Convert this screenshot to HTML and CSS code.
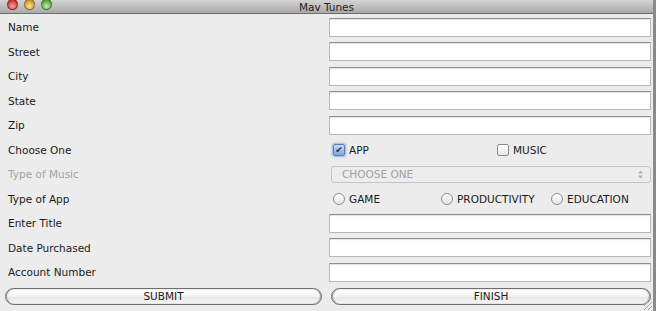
FILE: index.html
```html
<!DOCTYPE html>
<html lang="en">
<head>
    <meta charset="UTF-8">
    <title>Mav Tunes</title>
    <link rel="stylesheet" href="styles.css">
</head>
<body>
    <div class="window">
        <div class="titlebar">
            <div class="lights">
                <span class="light red"></span>
                <span class="light yellow"></span>
                <span class="light green"></span>
            </div>
            <div class="title">Mav Tunes</div>
        </div>

        <form class="form">
            <div class="row"><label>Name</label><input type="text" class="field"></div>
            <div class="row"><label>Street</label><input type="text" class="field"></div>
            <div class="row"><label>City</label><input type="text" class="field"></div>
            <div class="row"><label>State</label><input type="text" class="field"></div>
            <div class="row"><label>Zip</label><input type="text" class="field"></div>

            <div class="row">
                <label>Choose One</label>
                <div class="options">
                    <span class="opt opt-app"><span class="check checked">&#10004;</span>APP</span>
                    <span class="opt"><span class="check"></span>MUSIC</span>
                </div>
            </div>

            <div class="row">
                <label class="disabled">Type of Music</label>
                <div class="select">
                    <span>CHOOSE ONE</span>
                    <svg class="arrows" width="5" height="9" viewBox="0 0 5 9">
                        <path d="M0 3.5 L2.5 0.5 L5 3.5 Z M0 5.5 L2.5 8.5 L5 5.5 Z" fill="#b0b0b0"/>
                    </svg>
                </div>
            </div>

            <div class="row">
                <label>Type of App</label>
                <div class="options">
                    <span class="opt opt-game"><span class="radio"></span>GAME</span>
                    <span class="opt opt-prod"><span class="radio"></span>PRODUCTIVITY</span>
                    <span class="opt"><span class="radio"></span>EDUCATION</span>
                </div>
            </div>

            <div class="row"><label>Enter Title</label><input type="text" class="field"></div>
            <div class="row"><label>Date Purchased</label><input type="text" class="field"></div>
            <div class="row"><label>Account Number</label><input type="text" class="field"></div>

            <div class="buttons">
                <button type="button" class="btn btn-submit">SUBMIT</button>
                <button type="button" class="btn btn-finish">FINISH</button>
            </div>
        </form>
        <div class="grip"></div>
    </div>
</body>
</html>
```

FILE: styles.css
```css
* {
    margin: 0;
    padding: 0;
    box-sizing: border-box;
}

body {
    font-family: "DejaVu Sans", "Liberation Sans", sans-serif;
    font-size: 10.5px;
    color: #1a1a1a;
    background: #ececec;
    width: 656px;
    height: 311px;
    overflow: hidden;
}

.window {
    position: relative;
    height: 311px;
    background: #ececec;
    border-right: 3px solid #8a8a8a;
}

.titlebar {
    position: relative;
    height: 14px;
    background: linear-gradient(#d4d4d4, #a9a9a9);
    border-bottom: 1px solid #6e6e6e;
    display: flex;
    justify-content: center;
    align-items: center;
}

.lights {
    position: absolute;
    left: 7px;
    top: -1px;
    display: flex;
    gap: 6px;
}

.light {
    width: 11px;
    height: 11px;
    border-radius: 50%;
    border: 1px solid rgba(0, 0, 0, 0.35);
}

.red { background: radial-gradient(circle at 50% 70%, #f7a0a0, #d23b3b 70%); }
.yellow { background: radial-gradient(circle at 50% 70%, #fbe1a0, #d99a2b 70%); }
.green { background: radial-gradient(circle at 50% 70%, #c4ecb0, #5ea84a 70%); }

.title {
    font-size: 10.5px;
    color: #222;
    padding-top: 1px;
}

.form {
    padding-top: 1px;
}

.row {
    display: flex;
    align-items: center;
    height: 24.5px;
}

.row label {
    width: 329px;
    padding-left: 8px;
}

.row label.disabled {
    color: #a3a3a3;
}

.field {
    width: 322px;
    height: 19px;
    border: 1px solid #b8b8b8;
    border-top-color: #8f8f8f;
    background: #fff;
    box-shadow: inset 0 1px 1px rgba(0, 0, 0, 0.12);
}

.options {
    display: flex;
    align-items: center;
    padding-left: 4px;
}

.opt {
    display: flex;
    align-items: center;
    gap: 4px;
}

.opt-app { width: 164px; }
.opt-game { width: 108px; }
.opt-prod { width: 110px; }

.check {
    width: 12px;
    height: 12px;
    border: 1px solid #8a8a8a;
    border-radius: 2px;
    background: linear-gradient(#fff, #e6e6e6);
    font-size: 9px;
    line-height: 10px;
    text-align: center;
}

.check.checked {
    border-color: #5b7fb5;
    background: linear-gradient(#c7daf3, #80a8dc);
    color: #1b2f4f;
    box-shadow: 0 0 2px 1px rgba(90, 140, 210, 0.6);
}

.radio {
    width: 12px;
    height: 12px;
    border: 1px solid #8d8d8d;
    border-radius: 50%;
    background: linear-gradient(#fff, #e4e4e4);
}

.select {
    width: 320px;
    height: 17px;
    margin-left: 2px;
    border: 1px solid #c4c4c4;
    border-radius: 3px;
    background: #ededed;
    color: #a0a0a0;
    display: flex;
    align-items: center;
    justify-content: space-between;
    padding: 0 7px 0 10px;
}

.buttons {
    display: flex;
    padding: 3px 0 0 5px;
    gap: 9px;
}

.btn {
    height: 17px;
    border: 1px solid #6f6f6f;
    border-radius: 9px;
    background: linear-gradient(#ffffff, #f2f2f2 50%, #e4e4e4 51%, #f8f8f8);
    box-shadow: inset 1px 0 1px #9a9a9a, inset -1px 0 1px #9a9a9a;
    font-family: "DejaVu Sans", "Liberation Sans", sans-serif;
    font-size: 10.5px;
    color: #1a1a1a;
}

.btn-submit { width: 317px; }
.btn-finish { width: 320px; }

.grip {
    position: absolute;
    right: 1px;
    bottom: 1px;
    width: 8px;
    height: 8px;
    background: repeating-linear-gradient(135deg, transparent 0 2px, #a8a8a8 2px 3px);
}
```
